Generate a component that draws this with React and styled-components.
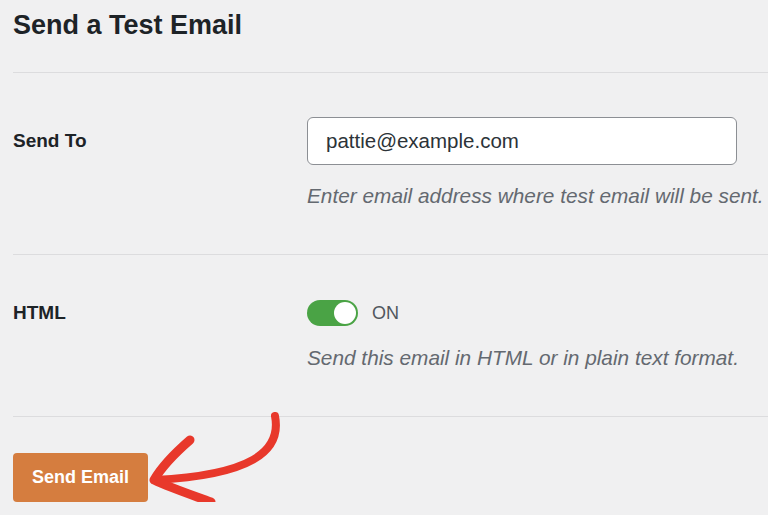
import React from "react";
import styled, { createGlobalStyle } from "styled-components";

const GlobalStyle = createGlobalStyle`
    html, body {
        margin: 0;
        background: #f0f0f1;
    }
    body {
        font-family: "Liberation Sans", Arial, sans-serif;
        color: #1d2327;
    }
`;

const Page = styled.div`
    padding: 0 0 0 13px;
    width: 755px;
    overflow: hidden;
`;

const Title = styled.h1`
    font-size: 27px;
    font-weight: 700;
    line-height: 50px;
    margin: 0;
    color: #1d2327;
`;

const Section = styled.div`
    border-top: 1px solid #dcdcde;
    margin-top: ${(p) => p.$top || 0}px;
`;

const Row = styled.div`
    display: grid;
    grid-template-columns: 294px 1fr;
    padding: ${(p) => p.$top}px 0 46px;
    border-bottom: 1px solid #dcdcde;
`;

const Label = styled.div`
    font-size: 19px;
    font-weight: 700;
    line-height: ${(p) => p.$height}px;
    color: #1d2327;
`;

const Field = styled.div`
    display: flex;
    flex-direction: column;
    align-items: flex-start;
`;

const Input = styled.input`
    box-sizing: border-box;
    width: 430px;
    height: 48px;
    padding: 0 18px;
    border: 1px solid #8c8f94;
    border-radius: 6px;
    background: #fff;
    font-family: "Liberation Sans", Arial, sans-serif;
    font-size: 20.5px;
    color: #2c3338;
    outline: none;
`;

const Description = styled.p`
    margin: ${(p) => p.$gap}px 0 0;
    font-size: 20.8px;
    font-style: italic;
    line-height: 24px;
    color: #646970;
    white-space: nowrap;
`;

const ToggleLine = styled.div`
    display: flex;
    align-items: center;
    gap: 14px;
    height: 26px;
`;

const Switch = styled.span`
    position: relative;
    display: inline-block;
    width: 51px;
    height: 26px;
    border-radius: 13px;
    background: ${(p) => (p.$on ? "#4aa345" : "#8c8f94")};

    &::after {
        content: "";
        position: absolute;
        top: 2px;
        left: ${(p) => (p.$on ? "27px" : "2px")};
        width: 22px;
        height: 22px;
        border-radius: 50%;
        background: #fff;
    }
`;

const SwitchText = styled.span`
    font-size: 18px;
    color: #50575e;
`;

const Footer = styled.div`
    position: relative;
    padding-top: 36px;
`;

const Button = styled.button`
    width: 135px;
    height: 49px;
    border: none;
    border-radius: 4px;
    background: #d57d3f;
    color: #fff;
    font-family: "Liberation Sans", Arial, sans-serif;
    font-size: 18px;
    font-weight: 700;
    cursor: pointer;
`;

const Arrow = styled.svg`
    position: absolute;
    left: 130px;
    top: -20px;
    overflow: visible;
`;

export default function App() {
    return (
        <>
            <GlobalStyle />
            <Page>
                <Title>Send a Test Email</Title>
                <Section $top={22}>
                    <Row $top={44}>
                        <Label $height={48}>Send To</Label>
                        <Field>
                            <Input defaultValue="pattie@example.com" />
                            <Description $gap={19}>
                                Enter email address where test email will be sent.
                            </Description>
                        </Field>
                    </Row>
                    <Row $top={45}>
                        <Label $height={26}>HTML</Label>
                        <Field>
                            <ToggleLine>
                                <Switch $on />
                                <SwitchText>ON</SwitchText>
                            </ToggleLine>
                            <Description $gap={20}>
                                Send this email in HTML or in plain text format.
                            </Description>
                        </Field>
                    </Row>
                </Section>
                <Footer>
                    <Button>Send Email</Button>
                    {/* hand-drawn pointer, offsets relative to footer (top = 417) */}
                    <Arrow width="150" height="110" viewBox="143 397 150 110">
                        <g fill="none" stroke="#e8382b" strokeLinecap="round" strokeLinejoin="round">
                            <path d="M275 416 C282 452 250 475 155 480" strokeWidth="8" />
                            <path d="M190 440 C175 453 161 468 154 480 C171 488 192 495 211 502" strokeWidth="9" />
                        </g>
                    </Arrow>
                </Footer>
            </Page>
        </>
    );
}
